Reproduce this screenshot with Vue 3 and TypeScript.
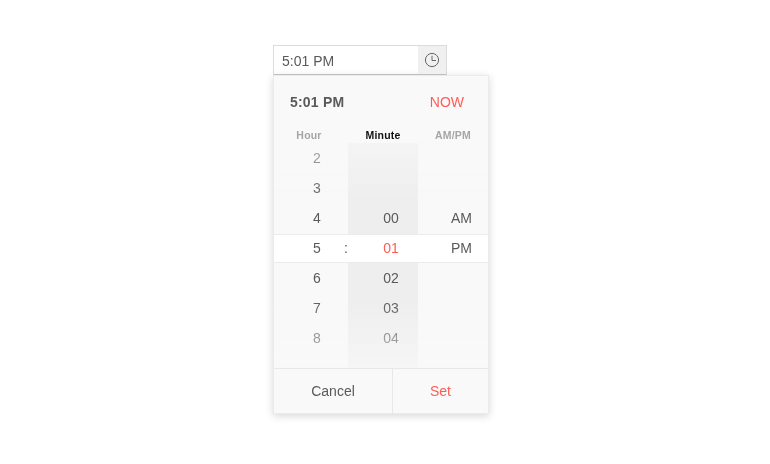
<script setup lang="ts">
import { ref } from "vue";

const time = ref("5:01 PM");

// rows start at the top of the wheel, blanks keep the columns aligned
const hours = ["2", "3", "4", "5", "6", "7", "8"];
const minutes = ["", "", "00", "01", "02", "03", "04"];
const periods = ["", "", "AM", "PM"];
const selectedRow = 3;
</script>

<template>
  <div class="page">
    <div class="picker">
      <div class="field">
        <span class="field__value">{{ time }}</span>
        <button class="field__btn" type="button" aria-label="Open">
          <svg viewBox="0 0 16 16" aria-hidden="true">
            <circle cx="8" cy="8" r="6.6" fill="none" stroke="currentColor" stroke-width="1" />
            <path d="M8 3.8V8.5h4" fill="none" stroke="currentColor" stroke-width="1" />
          </svg>
        </button>
      </div>

      <div class="popup">
        <div class="popup__head">
          <span class="popup__time">{{ time }}</span>
          <span class="popup__now">NOW</span>
        </div>

        <div class="labels">
          <span class="labels__hour">Hour</span>
          <span class="labels__minute">Minute</span>
          <span class="labels__period">AM/PM</span>
        </div>

        <div class="wheel">
          <div class="wheel__shade"></div>
          <div class="wheel__band"></div>
          <div class="wheel__col wheel__col--hour">
            <div v-for="(h, i) in hours" :key="h" class="wheel__item">
              {{ h }}<span v-if="i === selectedRow" class="wheel__colon">:</span>
            </div>
          </div>
          <div class="wheel__col wheel__col--minute">
            <div
              v-for="(m, i) in minutes"
              :key="i"
              class="wheel__item"
              :class="{ 'is-selected': i === selectedRow }"
            >{{ m }}</div>
          </div>
          <div class="wheel__col wheel__col--period">
            <div v-for="(p, i) in periods" :key="i" class="wheel__item">{{ p }}</div>
          </div>
          <div class="wheel__fade wheel__fade--top"></div>
          <div class="wheel__fade wheel__fade--bottom"></div>
        </div>

        <div class="popup__foot">
          <button class="popup__cancel" type="button">Cancel</button>
          <button class="popup__set" type="button">Set</button>
        </div>
      </div>
    </div>
  </div>
</template>

<style scoped>
.page {
  width: 770px;
  height: 464px;
  padding: 45px 0 0 273px;
  box-sizing: border-box;
  background: #fff;
  font-family: "Liberation Sans", Arial, sans-serif;
  color: #5a5a5a;
}

.picker {
  width: 216px;
  will-change: transform;
}

.field {
  width: 174px;
  height: 30px;
  box-sizing: border-box;
  display: flex;
  border: 1px solid #dcdcdc;
  border-bottom-color: #c8c8c8;
  border-radius: 1px;
  background: #fff;
}

.field__value {
  flex: 1;
  padding-left: 8px;
  font-size: 14px;
  line-height: 30px;
}

.field__btn {
  width: 28px;
  padding: 0;
  border: 0;
  background: #f0f0f0;
  color: #666;
  display: flex;
  align-items: center;
  justify-content: center;
}

.field__btn svg {
  width: 16px;
  height: 16px;
}

.popup {
  width: 216px;
  height: 339px;
  box-sizing: border-box;
  border: 1px solid #ebebeb;
  background: #f9f9f9;
  box-shadow: 0 2px 8px rgba(0, 0, 0, 0.16);
  display: flex;
  flex-direction: column;
}

.popup__head {
  height: 50px;
  flex: none;
  display: flex;
  align-items: center;
  justify-content: space-between;
  padding: 2px 24px 0 16px;
  box-sizing: border-box;
  font-size: 14px;
}

.popup__time {
  font-weight: 700;
  letter-spacing: 0.2px;
}

.popup__now {
  color: #ff5c55;
}

.labels {
  height: 17px;
  flex: none;
  display: flex;
  font-size: 10.5px;
  font-weight: 700;
  line-height: 18px;
  letter-spacing: 0.2px;
  color: #a6a6a6;
}

.labels__hour {
  width: 74px;
  padding-right: 4px;
  box-sizing: border-box;
  text-align: center;
}

.labels__minute {
  width: 70px;
  text-align: center;
  color: #111;
}

.labels__period {
  width: 70px;
  text-align: center;
}

.wheel {
  position: relative;
  flex: 1;
  display: flex;
  overflow: hidden;
}

.wheel__shade {
  position: absolute;
  top: 0;
  bottom: 0;
  left: 74px;
  width: 70px;
  background: #eeeeee;
}

.wheel__band {
  position: absolute;
  left: 0;
  right: 0;
  top: 91px;
  height: 29px;
  box-sizing: border-box;
  background: #fff;
  border-top: 1px solid #ebebeb;
  border-bottom: 1px solid #ebebeb;
}

.wheel__col {
  position: relative;
  width: 70px;
  box-sizing: border-box;
}

.wheel__col--hour {
  width: 74px;
  padding-left: 12px;
}

.wheel__col--minute {
  padding-left: 16px;
}

.wheel__col--period {
  padding-right: 16px;
  text-align: right;
}

.wheel__item {
  position: relative;
  height: 30px;
  font-size: 14px;
  line-height: 30px;
}

.wheel__col--hour .wheel__item,
.wheel__col--minute .wheel__item {
  text-align: center;
}

.wheel__item.is-selected {
  color: #ff5c55;
}

.wheel__colon {
  position: absolute;
  left: 58px;
  top: 0;
}

.wheel__fade {
  position: absolute;
  left: 0;
  right: 0;
  height: 60px;
  pointer-events: none;
}

.wheel__fade--top {
  top: 0;
  background: linear-gradient(to bottom, rgba(249, 249, 249, 0.55), rgba(249, 249, 249, 0));
}

.wheel__fade--bottom {
  bottom: 0;
  height: 70px;
  background: linear-gradient(to top, rgba(249, 249, 249, 0.7), rgba(249, 249, 249, 0));
}

.popup__foot {
  height: 45px;
  flex: none;
  display: flex;
  border-top: 1px solid #e8e8e8;
  box-sizing: border-box;
}

.popup__foot button {
  padding: 0;
  border: 0;
  background: transparent;
  font: inherit;
  font-size: 14px;
}

.popup__foot .popup__cancel {
  width: 119px;
  border-right: 1px solid #e8e8e8;
  color: #5a5a5a;
}

.popup__foot .popup__set {
  flex: 1;
  color: #ff5c55;
}
</style>
